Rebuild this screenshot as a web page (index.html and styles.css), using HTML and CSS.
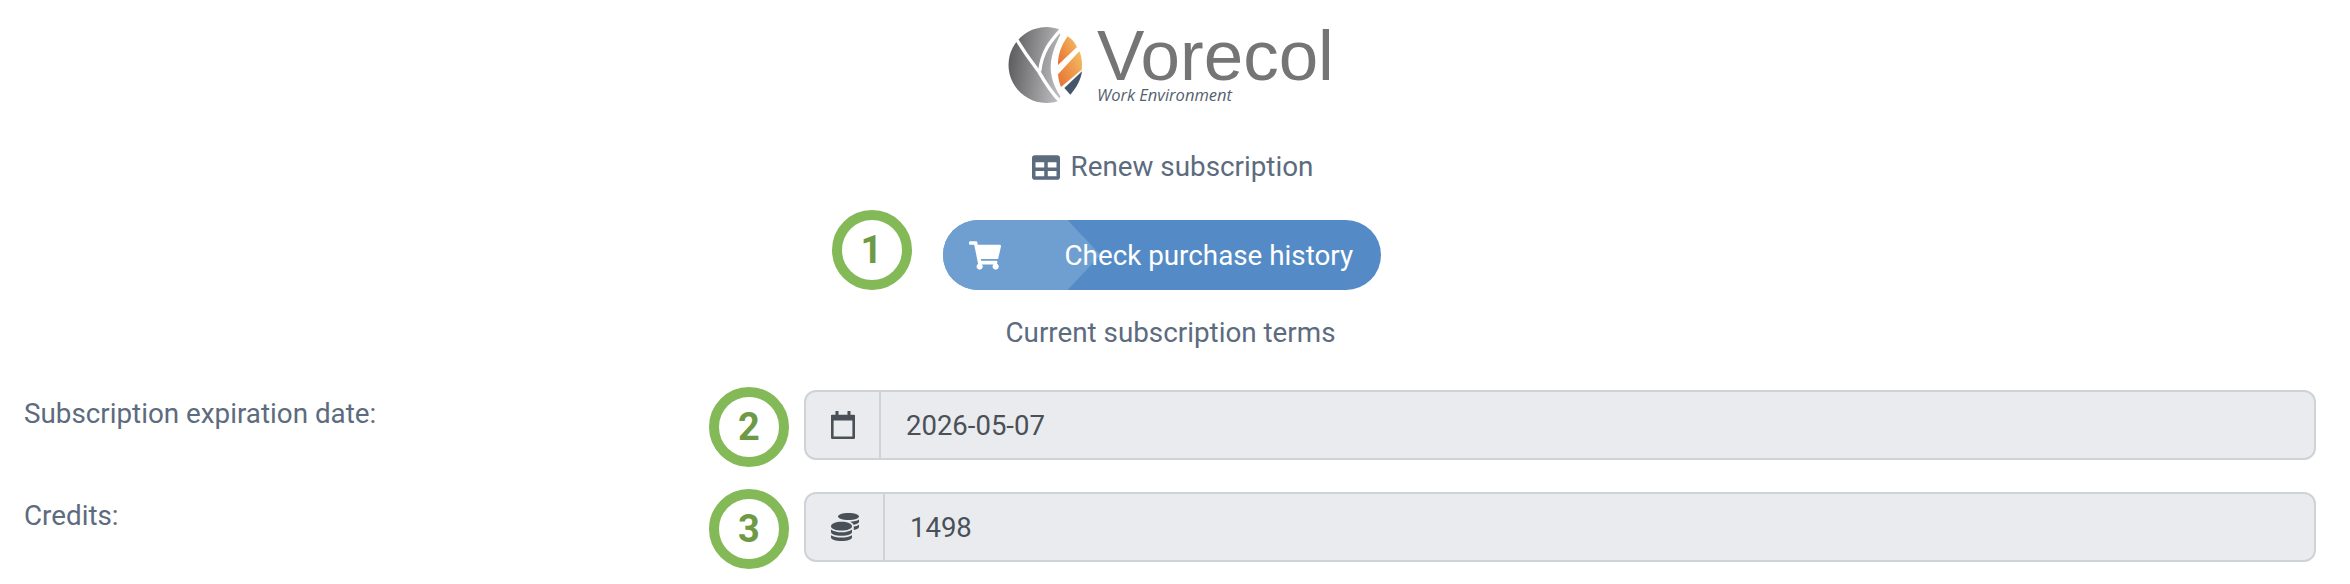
FILE: index.html
```html
<!DOCTYPE html>
<html lang="en">
<head>
    <meta charset="UTF-8">
    <title>Renew subscription</title>
    <link rel="stylesheet" href="styles.css">
</head>
<body>

<div class="page">
    <div class="logo">
        <svg class="logo-mark" viewBox="90 82 228 228" aria-hidden="true">
            <defs>
                <linearGradient id="greyFill" x1="0" y1="0.4" x2="1" y2="0.6">
                    <stop offset="0" stop-color="#5c5c5e"/>
                    <stop offset="1" stop-color="#bcbcbe"/>
                </linearGradient>
                <linearGradient id="orangeFill" x1="0" y1="1" x2="1" y2="0.2">
                    <stop offset="0" stop-color="#e66f31"/>
                    <stop offset="1" stop-color="#f3b860"/>
                </linearGradient>
            </defs>
            <path fill="url(#greyFill)" d="M245 88A114 114 0 1 0 245 304L250 290C224 250 215 210 225 170C229 150 240 125 250 105Z"/>
            <path fill="none" stroke="#fff" stroke-width="10" d="M118 118C150 170 170 195 185 215C205 250 225 280 248 304"/>
            <path fill="none" stroke="#fff" stroke-width="10" d="M252 90C220 125 195 155 188 215"/>
            <path fill="url(#orangeFill)" d="M272 110C285 118 294 130 300 142L243 196C242 165 254 135 272 110Z"/>
            <path fill="url(#orangeFill)" d="M307 155C314 170 317 190 314 210L252 262C247 250 244 238 243 224Z"/>
            <path fill="#46566a" d="M262 265L315 215C312 240 298 265 280 285Z"/>
        </svg>
        <div class="logo-text">
            <span class="logo-name">Vorecol</span>
            <span class="logo-tag">Work Environment</span>
        </div>
    </div>

    <h2 class="heading">
        <svg class="heading-icon" viewBox="0 32 512 448" aria-hidden="true">
            <path fill="currentColor" d="M464 32H48C21.49 32 0 53.49 0 80v352c0 26.51 21.49 48 48 48h416c26.51 0 48-21.49 48-48V80c0-26.51-21.49-48-48-48zM224 416H64v-96h160v96zm0-160H64v-96h160v96zm224 160H288v-96h160v96zm0-160H288v-96h160v96z"/>
        </svg>
        Renew subscription
    </h2>

    <div class="action">
        <span class="marker marker-action">1</span>
        <button class="history-btn" type="button">
            <span class="history-btn-tab">
                <svg class="cart-icon" viewBox="0 0 576 512" aria-hidden="true">
                    <path fill="currentColor" d="M528.12 301.319l47.273-208C578.806 78.301 567.391 64 551.99 64H159.208l-9.166-44.81C147.758 8.021 137.93 0 126.529 0H24C10.745 0 0 10.745 0 24v16c0 13.255 10.745 24 24 24h69.883l70.248 343.435C147.325 417.1 136 435.222 136 456c0 30.928 25.072 56 56 56s56-25.072 56-56c0-15.674-6.447-29.835-16.824-40h209.647C430.447 426.165 424 440.326 424 456c0 30.928 25.072 56 56 56s56-25.072 56-56c0-22.172-12.888-41.332-31.579-50.405l5.517-24.276c3.413-15.018-8.002-29.319-23.403-29.319H218.117l-6.545-32h293.145c11.206 0 20.92-7.754 23.403-18.681z"/>
                </svg>
            </span>
            <span class="history-btn-label">Check purchase history</span>
        </button>
    </div>

    <p class="subheading">Current subscription terms</p>

    <div class="terms">
        <label class="term-label">Subscription expiration date:</label>
        <div class="field">
            <span class="marker marker-field">2</span>
            <span class="field-addon">
                <svg class="field-icon" viewBox="0 0 24 28" aria-hidden="true">
                    <path fill="none" stroke="currentColor" stroke-width="2.6" stroke-linejoin="round" d="M1.3 5h21.4v21.7H1.3z"/>
                    <path fill="currentColor" d="M0 4h24v5.5H0zM4.5 0h3v5h-3zM16.5 0h3v5h-3z"/>
                </svg>
            </span>
            <span class="field-value">2026-05-07</span>
        </div>

        <label class="term-label">Credits:</label>
        <div class="field">
            <span class="marker marker-field">3</span>
            <span class="field-addon field-addon-wide">
                <svg class="coins-icon" viewBox="0 0 512 512" aria-hidden="true">
                    <path fill="currentColor" d="M0 405.3V448c0 35.3 86 64 192 64s192-28.7 192-64v-42.7C342.7 434.4 267.2 448 192 448S41.3 434.4 0 405.3zM320 128c106 0 192-28.7 192-64S426 0 320 0 128 28.7 128 64s86 64 192 64zM0 300.4V352c0 35.3 86 64 192 64s192-28.7 192-64v-51.6c-41.3 34-116.9 51.6-192 51.6S41.3 334.4 0 300.4zm416 11c57.3-11.1 96-31.7 96-55.4v-42.7c-23.2 16.4-57.3 27.6-96 34.5v63.6zM192 160C86 160 0 195.8 0 240s86 80 192 80 192-35.8 192-80-86-80-192-80zm219.3 56.3c60-10.8 100.7-32 100.7-56.3v-42.7c-35.5 25.1-96.5 38.6-160.7 41.8 29.5 14.3 51.2 33.5 60 57.2z"/>
                </svg>
            </span>
            <span class="field-value">1498</span>
        </div>
    </div>
</div>

</body>
</html>
```

FILE: styles.css
```css
body {
    margin: 0;
    background: #fff;
    font-family: 'Roboto', sans-serif;
    color: #5c6b7e;
}
.page {
    padding: 27px 34px 22px 24px;
    display: flex;
    flex-direction: column;
}

/* logo */
.logo {
    display: flex;
    justify-content: center;
    gap: 14px;
    margin-right: -1px;
}
.logo-mark {
    width: 76px;
    height: 76px;
}
.logo-text {
    display: flex;
    flex-direction: column;
}
.logo-name {
    font-family: 'Liberation Sans', sans-serif;
    font-size: 71px;
    line-height: 58px;
    color: #757575;
}
.logo-tag {
    font-family: 'Open Sans', sans-serif;
    font-style: italic;
    font-size: 16.5px;
    line-height: 20px;
    color: #555f6e;
}

/* headings */
.heading {
    display: flex;
    justify-content: center;
    align-items: center;
    gap: 11px;
    margin: 44px -5px 0 0;
    font-size: 27.8px;
    line-height: 36px;
    font-weight: 400;
}
.heading-icon {
    width: 28px;
    height: 25px;
}
.subheading {
    margin: 25px -1px 0 0;
    text-align: center;
    font-size: 27.8px;
    line-height: 36px;
}

/* button row */
.action {
    position: relative;
    width: 438px;
    align-self: center;
    margin: 35px 0 0 -17px;
}
.history-btn {
    display: flex;
    align-items: center;
    width: 100%;
    height: 70px;
    padding: 0;
    border: none;
    border-radius: 35px;
    background: #548bc6;
    color: #fff;
    font-family: inherit;
    font-size: 27.8px;
    overflow: hidden;
}
.history-btn-tab {
    display: flex;
    align-items: center;
    width: 158px;
    height: 70px;
    padding-left: 26px;
    box-sizing: border-box;
    background: #6f9fd1;
    clip-path: polygon(0 0, 125px 0, 158px 35px, 125px 70px, 0 70px);
}
.cart-icon {
    width: 32px;
    height: 29px;
}
.history-btn-label {
    margin-left: -36px;
    position: relative;
}

/* numbered annotations */
.marker {
    position: absolute;
    width: 80px;
    height: 80px;
    box-sizing: border-box;
    border: 10px solid #84b957;
    border-radius: 50%;
    background: #fff;
    display: flex;
    justify-content: center;
    align-items: center;
    font-family: 'Roboto', sans-serif;
    font-weight: 700;
    font-size: 38px;
    color: #6f9a45;
}
.marker-action {
    left: -111px;
    top: -10px;
}
.marker-field {
    left: -97px;
    top: -5px;
}

/* terms */
.terms {
    display: grid;
    grid-template-columns: 780px 1fr;
    row-gap: 32px;
    margin-top: 39px;
}
.term-label {
    font-size: 27.8px;
    line-height: 36px;
    padding-top: 6px;
}
.field {
    position: relative;
    display: flex;
    align-items: center;
    height: 70px;
    box-sizing: border-box;
    border: 2px solid #ced3d8;
    border-radius: 12px;
    background: #e9ebef;
    color: #495057;
    font-size: 27.5px;
}
.field-addon {
    display: flex;
    justify-content: center;
    align-items: center;
    width: 73px;
    height: 100%;
    border-right: 2px solid #ced3d8;
}
.field-addon-wide {
    width: 77px;
}
.field-icon {
    width: 24px;
    height: 28px;
}
.coins-icon {
    width: 28px;
    height: 28px;
}
.field-value {
    padding-left: 25px;
}
```
